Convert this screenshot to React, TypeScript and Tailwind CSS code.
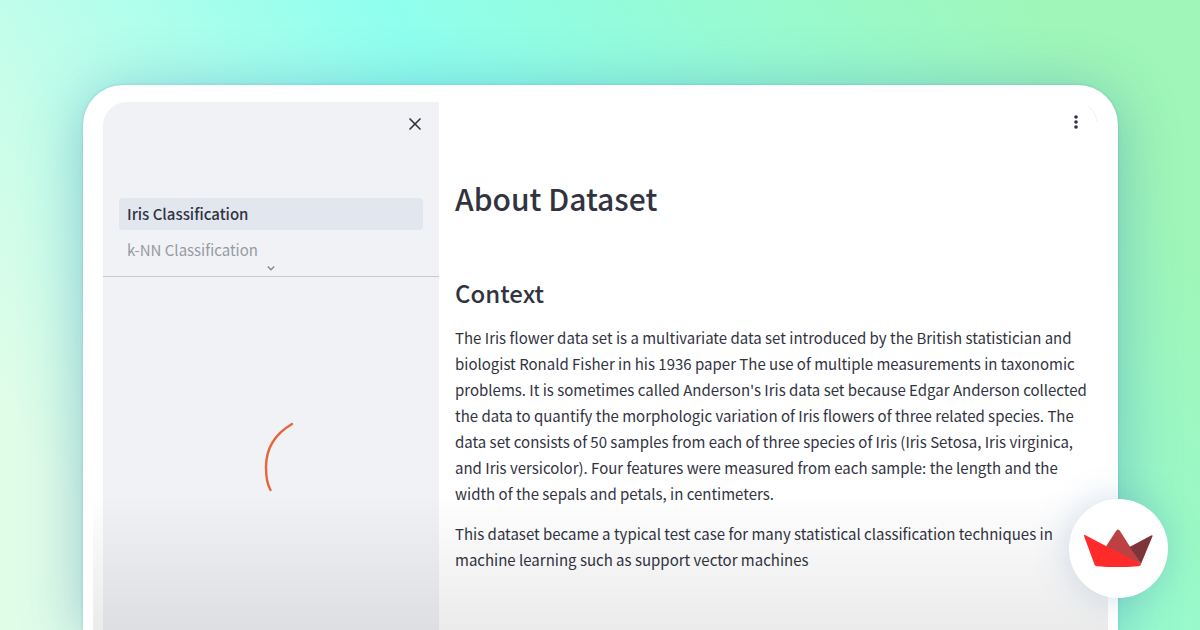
import React from 'react'
import { X } from 'lucide-react'

const pages = ['Iris Classification', 'k-NN Classification']

function Sidebar() {
  return (
    <aside className="w-[336px] shrink-0 rounded-tl-[24px] bg-[#f0f2f6]">
      <div className="flex h-24 items-start justify-end px-3 py-[10px]">
        <button type="button" aria-label="Close sidebar" className="flex size-6 items-center justify-center">
          <X size={20} strokeWidth={2} />
        </button>
      </div>
      <nav className="flex flex-col gap-1 px-4">
        {pages.map((page, i) => (
          <a
            key={page}
            href="#"
            className={
              i === 0
                ? 'flex h-8 items-center rounded bg-[#e2e7ef] px-2 text-[15px] font-medium'
                : 'flex h-8 items-center rounded px-2 text-[15px] text-[#979aa2]'
            }
          >
            {page}
          </a>
        ))}
      </nav>
      <button
        type="button"
        aria-label="Show more pages"
        className="flex h-[11px] w-full items-start justify-center border-b border-[#c8cad1]"
      >
        <svg width="8" height="5" viewBox="0 0 8 5" fill="none" stroke="#85878f" strokeWidth="1.4">
          <path d="M0.8 0.6 L4 3.8 L7.2 0.6" />
        </svg>
      </button>
      <svg className="mt-[142px] ml-[158px]" width="40" height="80" viewBox="0 0 40 80" fill="none" aria-hidden="true">
        <path d="M31 5 C14 15 5 28 5 48 C5 58 6.500 66 9.500 71" stroke="#e8643c" strokeWidth="2.4" strokeLinecap="round" />
      </svg>
    </aside>
  )
}

function Article() {
  return (
    <main className="relative min-w-0 flex-1 pr-2 pl-4">
      <svg className="absolute top-0 right-0" width="24" height="24" viewBox="0 0 24 24" fill="none" aria-hidden="true">
        <path d="M14 4 Q22 10 23 20" stroke="#f1f2f3" />
      </svg>
      <button type="button" aria-label="Main menu" className="absolute top-2 right-[10px] flex size-6 items-center justify-center">
        <svg width="4" height="14" viewBox="0 0 4 14" fill="currentColor">
          <circle cx="2" cy="2" r="1.8" />
          <circle cx="2" cy="7" r="1.8" />
          <circle cx="2" cy="12" r="1.8" />
        </svg>
      </button>
      <h1 className="pt-[76px] text-[30px] leading-[40px] font-medium">About Dataset</h1>
      <h2 className="pt-[59px] text-[24px] leading-[32px] font-medium">Context</h2>
      <p className="pt-4 text-[15px] leading-[26px]">
        The Iris flower data set is a multivariate data set introduced by the British statistician and
        biologist Ronald Fisher in his 1936 paper The use of multiple measurements in taxonomic
        problems. It is sometimes called Anderson's Iris data set because Edgar Anderson collected
        the data to quantify the morphologic variation of Iris flowers of three related species. The
        data set consists of 50 samples from each of three species of Iris (Iris Setosa, Iris virginica,
        and Iris versicolor). Four features were measured from each sample: the length and the
        width of the sepals and petals, in centimeters.
      </p>
      <p className="pt-[14px] text-[15px] leading-[26px]">
        This dataset became a typical test case for many statistical classification techniques in
        machine learning such as support vector machines
      </p>
    </main>
  )
}

function StreamlitBadge() {
  return (
    <a
      href="#"
      aria-label="Streamlit"
      className="absolute right-8 bottom-8 flex size-[99px] items-center justify-center rounded-full bg-white shadow-[0_0_36px_rgba(50,110,170,0.22)]"
    >
      <svg width="71" height="42" viewBox="0 0 71 42" aria-hidden="true">
        <path d="M35 1.5 Q36 1.5 37 3 L58 36 L22 20 L33 3 Q34 1.5 35 1.5Z" fill="#bd4043" />
        <path d="M46.500 19 L68 7.500 Q70 6.500 69.400 8.500 L58 36Z" fill="#7d353b" />
        <path d="M1 8 Q0.500 6.500 2 7 L23 18 L58 36 Q58 38 55 38.200 Q35 40 14 38.200 Q12 38 11.500 36.500Z" fill="#ff2b2b" />
      </svg>
    </a>
  )
}

function App() {
  return (
    <div className="relative flex h-screen flex-col overflow-hidden bg-[linear-gradient(59deg,#e0fde8_9%,#8fffee_48%,#9ff6b8_90%)] pt-[85px] pr-[82px] pl-[83px] font-['Noto_Sans_CJK_SC',sans-serif] text-[#31333f]">
      <div className="relative flex flex-1 rounded-t-[40px] bg-white px-5 pt-[17px] shadow-[0_0_3px_rgba(60,130,180,0.3),0_8px_60px_rgba(60,130,180,0.45)]">
        <Sidebar />
        <Article />
        <div className="pointer-events-none absolute inset-x-[10px] bottom-0 h-[140px] bg-linear-to-b from-transparent to-black/8" />
      </div>
      <StreamlitBadge />
    </div>
  )
}

export default App
